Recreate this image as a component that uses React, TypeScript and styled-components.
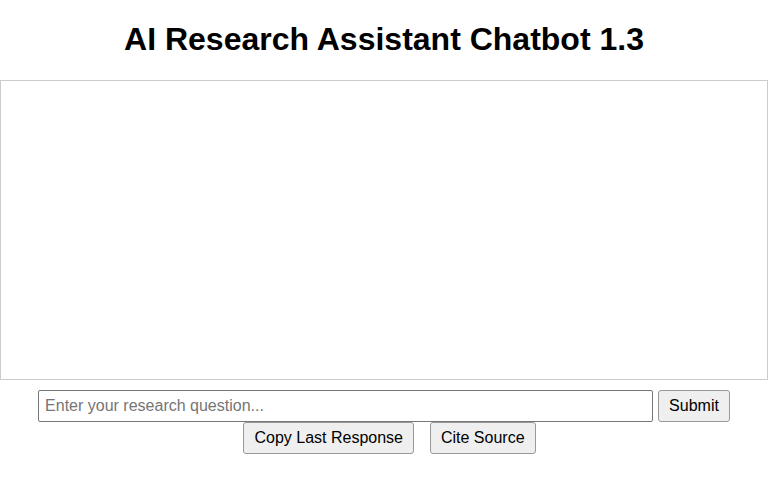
import React from "react";
import styled, { createGlobalStyle } from "styled-components";

const Global = createGlobalStyle`
  html, body { margin: 0; padding: 0; background: #fff; }
  body { font-family: "Liberation Sans", Arial, sans-serif; }
`;

const Page = styled.div`
  display: flex;
  flex-direction: column;
`;

const Title = styled.h1`
  margin: 20px 0 22px;
  height: 38px;
  line-height: 38px;
  font-size: 32px;
  font-weight: 700;
  text-align: center;
  color: #000;
`;

const ChatBox = styled.div`
  box-sizing: border-box;
  width: 768px;
  height: 300px;
  border: 1px solid #cccccc;
  overflow-y: auto;
  padding: 10px;
`;

const Controls = styled.div`
  display: flex;
  flex-direction: column;
  margin-top: 10px;
`;

const Row = styled.div<{ $gap: number; $shift?: number }>`
  display: flex;
  justify-content: center;
  gap: ${(p) => p.$gap}px;
  padding-left: ${(p) => p.$shift ?? 0}px;
`;

const Input = styled.input`
  box-sizing: border-box;
  width: 615px;
  height: 32px;
  padding: 0 6px;
  font-family: "Liberation Sans", Arial, sans-serif;
  font-size: 16px;
  color: #000;
  border: 1px solid #767676;
  border-radius: 2px;
  outline: none;
  &::placeholder { color: #757575; }
`;

const Button = styled.button`
  box-sizing: border-box;
  height: 32px;
  padding: 0 10px;
  font-family: "Liberation Sans", Arial, sans-serif;
  font-size: 16px;
  color: #000;
  background: #efefef;
  border: 1px solid #999;
  border-radius: 3px;
  cursor: pointer;
`;

export default function App() {
  return (
    <Page>
      <Global />
      <Title>AI Research Assistant Chatbot 1.3</Title>
      <ChatBox />
      <Controls>
        <Row $gap={5}>
          <Input placeholder="Enter your research question..." />
          <Button>Submit</Button>
        </Row>
        <Row $gap={16} $shift={11}>
          <Button>Copy Last Response</Button>
          <Button>Cite Source</Button>
        </Row>
      </Controls>
    </Page>
  );
}
